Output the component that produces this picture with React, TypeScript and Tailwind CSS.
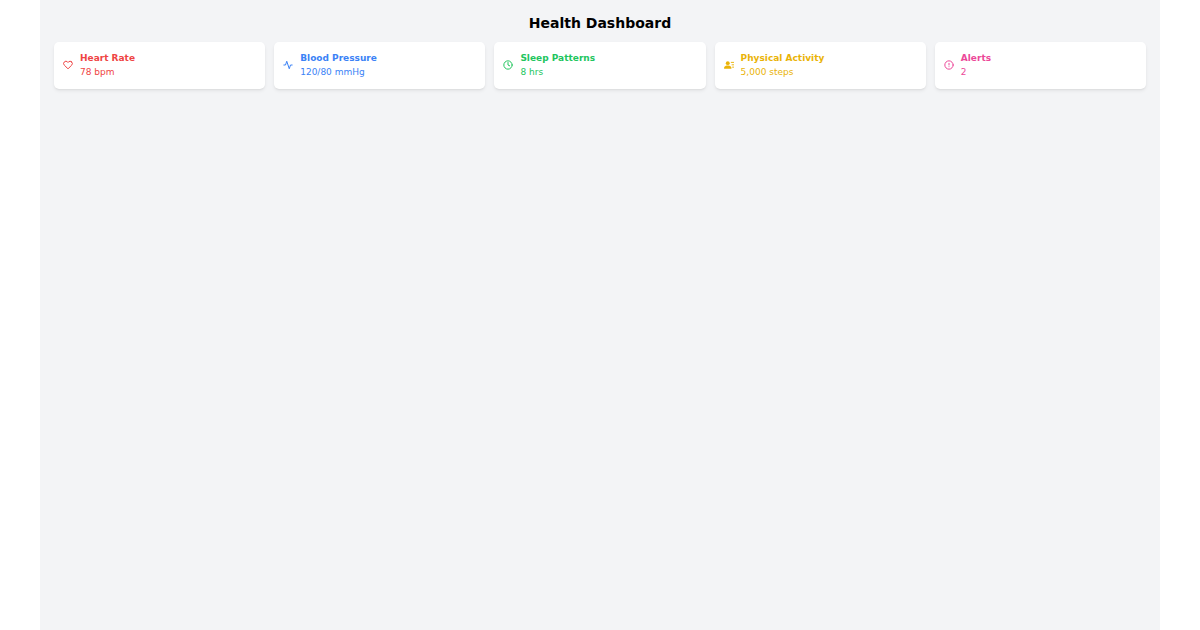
import { FiActivity, FiAlertCircle, FiClock, FiHeart } from "react-icons/fi";

function PersonLines({ className }: { className?: string }) {
  return (
    <svg viewBox="0 0 16 16" fill="currentColor" className={className} aria-hidden="true">
      <circle cx="6" cy="5" r="3.1" />
      <path d="M1 14s-1 0-1-1 1-4.3 6-4.3 6 3.3 6 4.3-1 1-1 1z" />
      <path d="M11 3.8h5M12.2 7.7H16M13 11.4h3" stroke="currentColor" strokeWidth="1.5" />
    </svg>
  );
}

const stats = [
  { title: "Heart Rate", value: "78 bpm", icon: FiHeart, color: "text-[#ef4444]" },
  { title: "Blood Pressure", value: "120/80 mmHg", icon: FiActivity, color: "text-[#3b82f6]" },
  { title: "Sleep Patterns", value: "8 hrs", icon: FiClock, color: "text-[#22c55e]" },
  { title: "Physical Activity", value: "5,000 steps", icon: PersonLines, color: "text-[#eab308]" },
  { title: "Alerts", value: "2", icon: FiAlertCircle, color: "text-[#ec4899]" },
];

export default function App() {
  return (
    <div className="bg-white px-10 font-['DejaVu_Sans',sans-serif]">
      <main className="min-h-screen bg-[#f3f4f6] p-3.5">
        <h1 className="mb-[9px] text-center text-[14px] leading-[19px] font-bold text-black">
          Health Dashboard
        </h1>
        <div className="grid grid-cols-5 gap-[9px]">
          {stats.map(({ title, value, icon: Icon, color }) => (
            <section
              key={title}
              className={`flex items-center gap-[7px] rounded-[5px] bg-white px-[9px] pt-[9px] pb-[10px] shadow-[0_2px_4px_-1px_rgba(0,0,0,0.1),0_1px_2px_-1px_rgba(0,0,0,0.1)] ${color}`}
            >
              <Icon className="size-[10px] shrink-0 stroke-[2.4]" aria-hidden="true" />
              <div className="text-[9px] leading-[14px]">
                <h2 className="font-bold">{title}</h2>
                <p>{value}</p>
              </div>
            </section>
          ))}
        </div>
      </main>
    </div>
  );
}
